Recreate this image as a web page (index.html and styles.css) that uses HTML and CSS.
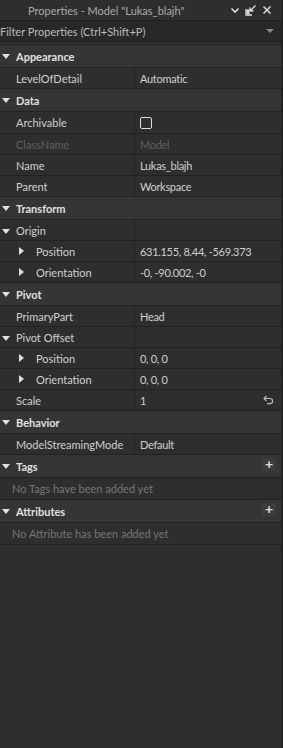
FILE: index.html
```html
<!DOCTYPE html>
<html lang="en">
<head>
    <meta charset="UTF-8">
    <title>Properties - Model "Lukas_blajh"</title>
    <link rel="stylesheet" href="styles.css">
</head>
<body>
    <div class="panel">
        <div class="titlebar">
            <span class="title">Properties - Model "Lukas_blajh"</span>
            <div class="title-icons">
                <svg width="10" height="10" viewBox="0 0 10 10"><path d="M1.5 3.5 L5 7 L8.5 3.5" fill="none" stroke="#ddd" stroke-width="1.6"/></svg>
                <svg width="12" height="12" viewBox="0 0 12 12"><path d="M1 5 V11 H7" fill="none" stroke="#ddd" stroke-width="1.3"/><path d="M1.5 5.5 H4.5 V10.5 H1.5 Z" fill="#ddd"/><path d="M5 7 L10.5 1.5 M5 7 V3.5 M5 7 H8.5" fill="none" stroke="#ddd" stroke-width="1.4"/></svg>
                <svg width="10" height="10" viewBox="0 0 10 10"><path d="M1.5 1.5 L8.5 8.5 M8.5 1.5 L1.5 8.5" fill="none" stroke="#ddd" stroke-width="1.5"/></svg>
            </div>
        </div>
        <div class="filter">
            <span>Filter Properties (Ctrl+Shift+P)</span>
            <span class="drop"></span>
        </div>

        <div class="list">
            <div class="row header"><span class="tri-down"></span>Appearance</div>
            <div class="row"><div class="name">LevelOfDetail</div><div class="value">Automatic</div></div>

            <div class="row header"><span class="tri-down"></span>Data</div>
            <div class="row tall"><div class="name">Archivable</div><div class="value"><span class="checkbox"></span></div></div>
            <div class="row disabled"><div class="name">ClassName</div><div class="value">Model</div></div>
            <div class="row"><div class="name">Name</div><div class="value">Lukas_blajh</div></div>
            <div class="row"><div class="name">Parent</div><div class="value">Workspace</div></div>

            <div class="row header"><span class="tri-down"></span>Transform</div>
            <div class="row"><div class="name"><span class="tri-down sub"></span>Origin</div><div class="value"></div></div>
            <div class="row"><div class="name child"><span class="tri-right"></span>Position</div><div class="value">631.155, 8.44, -569.373</div></div>
            <div class="row"><div class="name child"><span class="tri-right"></span>Orientation</div><div class="value">-0, -90.002, -0</div></div>

            <div class="row header"><span class="tri-down"></span>Pivot</div>
            <div class="row"><div class="name">PrimaryPart</div><div class="value">Head</div></div>
            <div class="row"><div class="name"><span class="tri-down sub"></span>Pivot Offset</div><div class="value"></div></div>
            <div class="row"><div class="name child"><span class="tri-right"></span>Position</div><div class="value">0, 0, 0</div></div>
            <div class="row"><div class="name child"><span class="tri-right"></span>Orientation</div><div class="value">0, 0, 0</div></div>
            <div class="row"><div class="name">Scale</div><div class="value">1
                <svg class="revert" width="11" height="10" viewBox="0 0 11 10"><path d="M3.5 1 L1 3.5 L3.5 6 M1 3.5 H7 A2.6 2.6 0 0 1 7 8.7 H4" fill="none" stroke="#bbb" stroke-width="1.2"/></svg>
            </div></div>

            <div class="row header"><span class="tri-down"></span>Behavior</div>
            <div class="row"><div class="name">ModelStreamingMode</div><div class="value">Default</div></div>

            <div class="row header"><span class="tri-down"></span>Tags<span class="add">+</span></div>
            <div class="row empty">No Tags have been added yet</div>

            <div class="row header"><span class="tri-down"></span>Attributes<span class="add">+</span></div>
            <div class="row empty">No Attribute has been added yet</div>
        </div>
    </div>
</body>
</html>
```
FILE: styles.css
```css
body {
    margin: 0;
    background-color: #2e2e2e;
    font-family: Lato, "Noto Sans", sans-serif;
    font-size: 11px;
    color: #d0d0d0;
}
.panel {
    height: 748px;
    border-right: 2px solid #222222;
    box-sizing: border-box;
}
.titlebar {
    height: 20px;
    display: flex;
    align-items: center;
    background-color: #2e2e2e;
}
.title {
    margin-left: 28px;
    font-size: 11px;
    color: #aaaaaa;
}
.title-icons {
    margin-left: auto;
    margin-right: 9px;
    display: flex;
    align-items: center;
    gap: 5px;
}
.filter {
    height: 20px;
    display: flex;
    align-items: center;
    background-color: #282828;
    border-top: 1px solid #1f1f1f;
    border-bottom: 1px solid #1f1f1f;
    color: #bbbbbb;
}
.drop {
    margin-left: auto;
    margin-right: 7px;
    border-left: 4px solid transparent;
    border-right: 4px solid transparent;
    border-top: 4px solid #888888;
}
.list {
    margin-top: 2px;
    border-top: 1px solid #222222;
}
.row {
    height: 21px;
    display: flex;
    align-items: stretch;
    border-bottom: 1px solid #222222;
    box-sizing: border-box;
    position: relative;
}
.row.tall {
    height: 22px;
}
.header {
    height: 23px;
    align-items: center;
    background-color: #353535;
    font-weight: bold;
    color: #e0e0e0;
    padding-left: 16px;
}
.name {
    width: 135px;
    flex-shrink: 0;
    display: flex;
    align-items: center;
    padding-left: 16px;
    box-sizing: border-box;
    border-right: 1px solid #222222;
    white-space: nowrap;
    position: relative;
}
.name.child {
    padding-left: 36px;
}
.value {
    flex: 1;
    display: flex;
    align-items: center;
    padding-left: 5px;
    white-space: nowrap;
    letter-spacing: -0.3px;
    position: relative;
}
.disabled .name,
.disabled .value {
    color: #606060;
}
.tri-down {
    position: absolute;
    left: 2px;
    top: 9px;
    border-left: 4px solid transparent;
    border-right: 4px solid transparent;
    border-top: 5px solid #e0e0e0;
}
.tri-right {
    position: absolute;
    left: 19px;
    top: 6px;
    border-top: 4px solid transparent;
    border-bottom: 4px solid transparent;
    border-left: 5px solid #e0e0e0;
}
.checkbox {
    width: 10px;
    height: 10px;
    border: 1px solid #dddddd;
    border-radius: 2px;
}
.revert {
    position: absolute;
    right: 7px;
    top: 5px;
}
.add {
    position: absolute;
    right: 5px;
    top: 3px;
    width: 14px;
    height: 13px;
    line-height: 12px;
    text-align: center;
    background-color: #3c3c3c;
    color: #dddddd;
    font-size: 14px;
    font-weight: bold;
}
.empty {
    height: 22px;
    align-items: center;
    padding-left: 12px;
    color: #777777;
}
```
